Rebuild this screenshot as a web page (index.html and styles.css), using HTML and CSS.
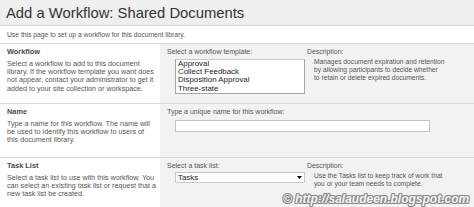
FILE: index.html
```html
<!DOCTYPE html>
<html lang="en">
<head>
  <meta charset="UTF-8" />
  <title>Add a Workflow: Shared Documents</title>
  <link rel="stylesheet" href="styles.css">
</head>
<body>
  <div class="titlebar"><h1>Add a Workflow: Shared Documents</h1></div>
  <p class="page-desc">Use this page to set up a workflow for this document library.</p>

  <!-- Workflow template -->
  <div class="section sec-workflow">
    <div class="info">
      <h3>Workflow</h3>
      <p>Select a workflow to add to this document<br>library. If the workflow template you want does<br>not appear, contact your administrator to get it<br>added to your site collection or workspace.</p>
    </div>
    <div class="body">
      <div class="field">
        <label>Select a workflow template:</label>
        <div class="listbox">
          <div>Approval</div>
          <div>Collect Feedback</div>
          <div>Disposition Approval</div>
          <div>Three-state</div>
        </div>
      </div>
      <div class="desc">
        <span class="desc-label">Description:</span>
        <p>Manages document expiration and retention<br>by allowing participants to decide whether<br>to retain or delete expired documents.</p>
      </div>
    </div>
  </div>

  <!-- Name -->
  <div class="section sec-name">
    <div class="info">
      <h3>Name</h3>
      <p>Type a name for this workflow. The name will<br>be used to identify this workflow to users of<br>this document library.</p>
    </div>
    <div class="body">
      <div class="field">
        <label>Type a unique name for this workflow:</label>
        <input type="text" class="textbox">
      </div>
    </div>
  </div>

  <!-- Task list -->
  <div class="section sec-tasks">
    <div class="info">
      <h3>Task List</h3>
      <p>Select a task list to use with this workflow. You<br>can select an existing task list or request that a<br>new task list be created.</p>
    </div>
    <div class="body">
      <div class="field">
        <label>Select a task list:</label>
        <div class="dropdown">
          <span>Tasks</span>
          <svg width="5" height="3" viewBox="0 0 5 3"><path d="M0 0H5L2.5 3Z" fill="#000"/></svg>
        </div>
      </div>
      <div class="desc">
        <span class="desc-label">Description:</span>
        <p>Use the Tasks list to keep track of work that<br>you or your team needs to complete.</p>
      </div>
    </div>
  </div>

  <div class="watermark">© http://salaudeen.blogspot.com</div>
</body>
</html>
```

FILE: styles.css
```css
* { box-sizing: border-box; }
body {
  margin: 0; width: 474px; height: 207px; overflow: hidden; position: relative;
  background: #fff; color: #555;
  font-family: "Liberation Sans", Arial, sans-serif;
}
.titlebar { height: 26px; background: #efefef; border-bottom: 1px solid #d6d6d6; padding-left: 6px; }
h1 { margin: 0; padding-top: 2px; font-size: 14.8px; font-weight: normal; line-height: 23px; color: #333; }
.page-desc { margin: 0; padding: 4px 7px 3px; font-size: 6.75px; line-height: 10px; }

.section { display: grid; grid-template-columns: 160px 1fr; border-top: 1px solid #d9d9d9; }
.sec-workflow { height: 60px; }
.sec-name { height: 54px; }
.sec-tasks { height: 50px; }

.info { padding: 3px 0 0 7px; white-space: nowrap; }
.info h3 { margin: 0; font-size: 7.4px; line-height: 10px; font-weight: bold; color: #4a4a4a; }
.info p { margin: 3px 0 0; font-size: 7.2px; line-height: 8.2px; }

.body { display: flex; background: #f2f2f2; padding: 3px 0 0 7px; }
.field { width: 138px; flex-shrink: 0; }
.sec-name .field { width: auto; }
.field label { display: block; font-size: 7px; line-height: 10px; }

.listbox {
  width: 130px; margin: 2px 0 0 8px; padding-left: 2px;
  background: #fff; border: 1px solid #a5a5a5; border-top-color: #c8c8c8;
  font-size: 7.9px; line-height: 8.2px; color: #222;
}
.textbox {
  display: block; width: 255px; height: 12px; margin: 3px 0 0 8px; padding: 0;
  background: #fff; border: 1px solid #c5c5c5;
}
.dropdown {
  display: flex; align-items: center; justify-content: space-between;
  width: 130px; height: 11px; margin: 1px 0 0 8px; padding: 0 2px 0 2px;
  background: #fff; border: 1px solid #c8c8c8;
  font-size: 7.9px; color: #222;
}

.desc { margin-left: 2px; white-space: nowrap; }
.desc-label { display: block; font-size: 6.9px; line-height: 10px; }
.desc p { margin: 1px 0 0 7px; font-size: 6.7px; line-height: 8.2px; }

.watermark {
  position: absolute; left: 283px; top: 193px;
  font: italic bold 12px/12px "Liberation Sans", sans-serif;
  color: #f6f6f6;
  text-shadow: 1px 0 #888, -1px 0 #888, 0 1px #888, 0 -1px #888,
               1px 1px #999, -1px -1px #999, 1px -1px #999, -1px 1px #999;
}
```
